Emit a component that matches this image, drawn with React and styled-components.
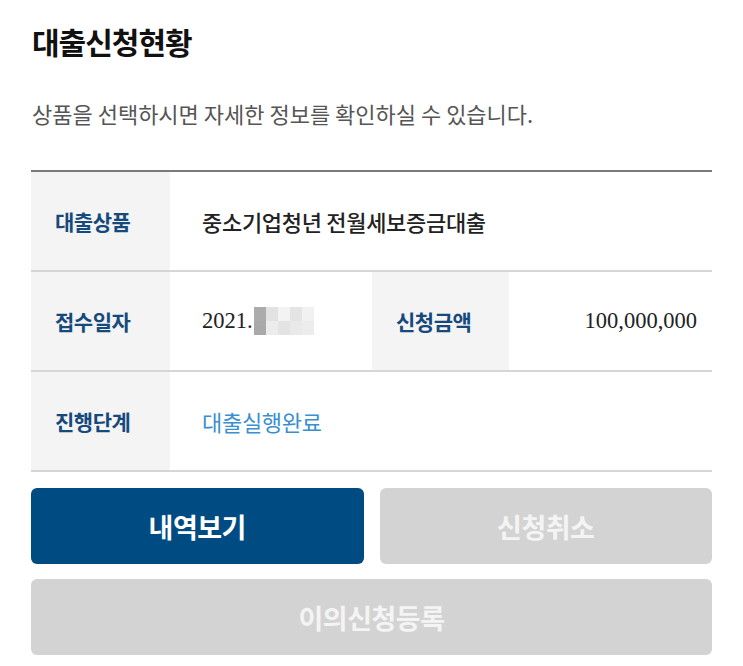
import React from 'react'
import styled, { createGlobalStyle } from 'styled-components'

const GlobalStyle = createGlobalStyle`
  html, body {
    margin: 0;
    padding: 0;
    background: #fff;
  }
  body {
    font-family: "Noto Sans CJK KR", "Noto Sans", sans-serif;
  }
`

const mosaic = [
  '#acacac', '#e2e2e2', '#f3f3f3', '#e4e4e4', '#f1f1f1',
  '#a9a9a9', '#ececec', '#e3e3e3', '#e9e9e9', '#ececec',
]

function App() {
  return (
    <Page>
      <GlobalStyle />
      <Title>대출신청현황</Title>
      <Desc>상품을 선택하시면 자세한 정보를 확인하실 수 있습니다.</Desc>

      <Table>
        <Row>
          <Label>대출상품</Label>
          <Value>중소기업청년 전월세보증금대출</Value>
        </Row>
        <Row>
          <Label>접수일자</Label>
          <Value width={202}>
            <Serif>2021.</Serif>
            <Mosaic>
              {mosaic.map((c, i) => (
                <span key={i} style={{ background: c }} />
              ))}
            </Mosaic>
          </Value>
          <Label narrow>신청금액</Label>
          <Value right>
            <Serif>100,000,000</Serif>
          </Value>
        </Row>
        <Row>
          <Label>진행단계</Label>
          <Value status>대출실행완료</Value>
        </Row>
      </Table>

      <Buttons>
        <Button primary>내역보기</Button>
        <Button>신청취소</Button>
        <Button full>이의신청등록</Button>
      </Buttons>
    </Page>
  )
}

const Page = styled.div`
  width: 681px;
  padding: 21px 31px 0 31px;
`

const Title = styled.h1`
  margin: 0 0 0 1px;
  font-size: 30px;
  font-weight: 700;
  letter-spacing: -1px;
  line-height: 40px;
  color: #111;
`

const Desc = styled.p`
  margin: 37px 0 0 1px;
  font-size: 22px;
  font-weight: 400;
  letter-spacing: 0;
  line-height: 30px;
  color: #555;
`

const Table = styled.div`
  margin-top: 42px;
  border-top: 2px solid #7a7a7a;
`

const Row = styled.div`
  display: flex;
  height: 98px;
  border-bottom: 2px solid #d6d6d6;
`

const Label = styled.div`
  flex: 0 0 ${p => (p.narrow ? 137 : 139)}px;
  display: flex;
  align-items: center;
  padding-left: 24px;
  box-sizing: border-box;
  background: #f4f4f4;
  color: #164a7d;
  font-size: 21px;
  font-weight: 700;
  letter-spacing: -0.5px;
`

const Value = styled.div`
  flex: ${p => (p.width ? `0 0 ${p.width}px` : '1 1 0')};
  min-width: 0;
  box-sizing: border-box;
  display: flex;
  align-items: center;
  justify-content: ${p => (p.right ? 'flex-end' : 'flex-start')};
  padding: ${p => (p.right ? '0 15px 0 0' : '0 0 0 32px')};
  color: ${p => (p.status ? '#3a8fd0' : '#222')};
  font-size: 22px;
  font-weight: ${p => (p.status ? 400 : 500)};
  letter-spacing: -0.3px;
`

const Serif = styled.span`
  font-family: "Liberation Serif", serif;
  font-size: 22.5px;
  font-weight: 400;
  letter-spacing: 0;
  color: #222;
`

const Mosaic = styled.span`
  display: grid;
  grid-template-columns: repeat(5, 12px);
  grid-template-rows: repeat(2, 14px);
  margin-left: 1px;
  span {
    display: block;
  }
`

const Buttons = styled.div`
  display: grid;
  grid-template-columns: 1fr 1fr;
  gap: 15px 16px;
  margin-top: 16px;
`

const Button = styled.button`
  grid-column: ${p => (p.full ? '1 / -1' : 'auto')};
  height: 76px;
  border: none;
  border-radius: 6px;
  background: ${p => (p.primary ? '#004c82' : '#d3d3d3')};
  color: ${p => (p.primary ? '#fff' : '#f4f4f4')};
  font-family: "Noto Sans CJK KR", "Noto Sans", sans-serif;
  font-size: 27px;
  font-weight: 700;
  letter-spacing: -0.5px;
  cursor: pointer;
`

export default App
